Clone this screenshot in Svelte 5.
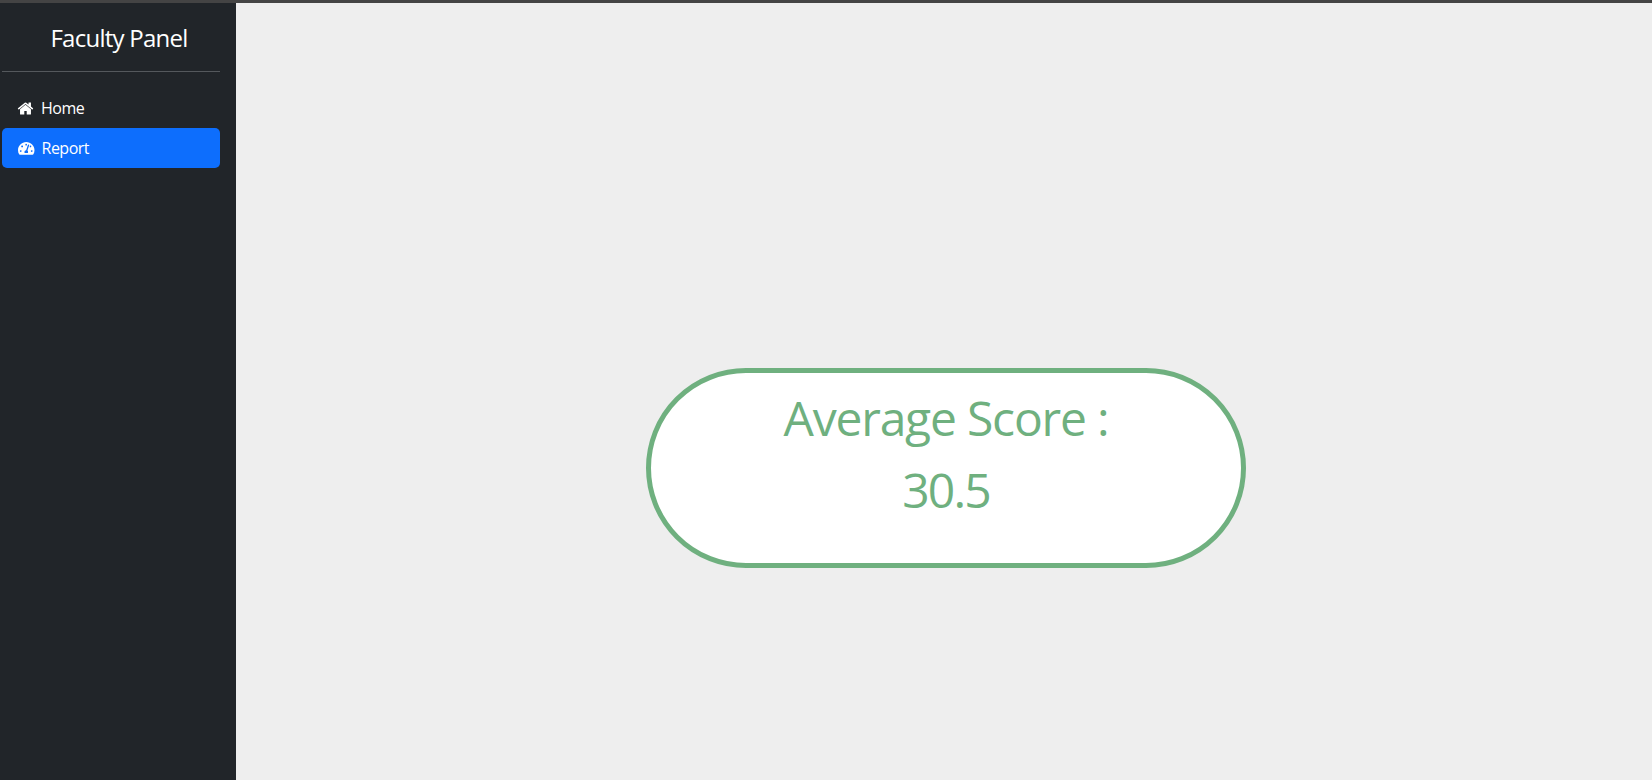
<script>
  const navItems = [
    { label: 'Home', icon: 'home', active: false },
    { label: 'Report', icon: 'gauge', active: true }
  ];
</script>

<div class="page">
  <div class="topline"></div>
  <div class="shell">
    <aside class="sidebar">
      <div class="brand">Faculty Panel</div>
      <hr class="rule" />
      <nav class="nav">
        {#each navItems as item}
          <a href="#top" class="link" class:active={item.active}>
            {#if item.icon === 'home'}
              <svg class="icon home" viewBox="0 0 1792 1792" aria-hidden="true"><path fill="currentColor" d="M1472 992v480q0 26-19 45t-45 19h-384v-384h-256v384h-384q-26 0-45-19t-19-45v-480q0-1 .5-3t.5-3l575-474 575 474q1 2 1 6zm223-69l-62 74q-8 9-21 11h-3q-13 0-21-7l-692-577-692 577q-12 8-24 7-13-2-21-11l-62-74q-8-10-7-23.5t11-21.5l719-599q32-26 76-26t76 26l244 204v-195q0-14 9-23t23-9h192q14 0 23 9t9 23v408l219 182q10 8 11 21.5t-7 23.5z"/></svg>
            {:else}
              <svg class="icon gauge" viewBox="0 0 576 512" aria-hidden="true"><path fill="currentColor" d="M288 32C128.94 32 0 160.94 0 320c0 52.8 14.25 102.26 39.06 144.8 5.61 9.62 16.3 15.2 27.44 15.2h443c11.14 0 21.83-5.58 27.44-15.2C561.75 422.26 576 372.8 576 320c0-159.06-128.94-288-288-288zm0 64c14.71 0 26.58 10.13 30.32 23.65-1.11 2.26-2.64 4.23-3.45 6.67l-9.22 27.67c-5.13 3.49-10.97 6.01-17.64 6.01-17.67 0-32-14.33-32-32S270.33 96 288 96zM96 384c-17.67 0-32-14.33-32-32s14.33-32 32-32 32 14.33 32 32-14.33 32-32 32zm48-160c-17.67 0-32-14.33-32-32s14.33-32 32-32 32 14.33 32 32-14.33 32-32 32zm246.77-72.41l-61.33 184C343.13 347.33 352 364.54 352 384c0 11.72-3.38 22.55-8.88 32H232.88c-5.5-9.45-8.88-20.28-8.88-32 0-33.94 26.5-61.43 59.9-63.59l61.34-184.01c4.17-12.56 17.73-19.45 30.36-15.17 12.57 4.19 19.35 17.77 15.17 30.36zm14.66 57.2l15.52-46.55c3.47-1.29 7.13-2.23 11.05-2.23 17.67 0 32 14.33 32 32s-14.33 32-32 32c-11.38-.01-20.89-6.28-26.57-15.22zM480 384c-17.67 0-32-14.33-32-32s14.33-32 32-32 32 14.33 32 32-14.33 32-32 32z"/></svg>
            {/if}
            <span>{item.label}</span>
          </a>
        {/each}
      </nav>
    </aside>
    <main class="main">
      <div class="pill">
        <div class="score-label">Average Score :</div>
        <div class="score-value">30.5</div>
      </div>
    </main>
  </div>
</div>

<style>
  :global(body) { margin: 0; }
  .page {
    height: 780px;
    display: flex;
    flex-direction: column;
    font-family: "Open Sans", "Noto Sans", sans-serif;
    overflow: hidden;
  }
  .topline { height: 3px; background: #444; flex: none; }
  .shell { flex: 1; display: flex; min-height: 0; }
  .sidebar {
    width: 236px;
    flex: none;
    box-sizing: border-box;
    background: #212529;
    padding: 0 16px 0 2px;
    color: #fff;
  }
  .brand {
    font-size: 24px;
    line-height: 36px;
    letter-spacing: -0.75px;
    padding: 17px 0 0 0;
    text-align: center;
    margin-left: 8px;
    width: 218px;
  }
  .rule {
    height: 1px;
    border: 0;
    background: #54585c;
    margin: 15px 0 16px;
  }
  .nav { display: flex; flex-direction: column; }
  .link {
    height: 40px;
    display: flex;
    align-items: center;
    gap: 7px;
    padding-left: 16px;
    border-radius: 5px;
    color: #fff;
    text-decoration: none;
    font-size: 16px;
    letter-spacing: -0.5px;
  }
  .active { background: #0d6efd; }
  .icon { flex: none; }
  .home { width: 17px; height: 17px; margin-left: -1px; }
  .gauge { width: 16.5px; height: 14.67px; }
  .main {
    flex: 1;
    background: #eee;
    padding: 365px 0 0 410px;
  }
  .pill {
    width: 600px;
    height: 200px;
    box-sizing: border-box;
    border: 5px solid #6fb07f;
    border-radius: 100px;
    background: #fff;
    color: #6fb07f;
    font-size: 48px;
    line-height: 72px;
    text-align: center;
    padding-top: 9px;
  }
  .score-label { letter-spacing: -1.2px; }
  .score-value { letter-spacing: -1.8px; }
</style>
